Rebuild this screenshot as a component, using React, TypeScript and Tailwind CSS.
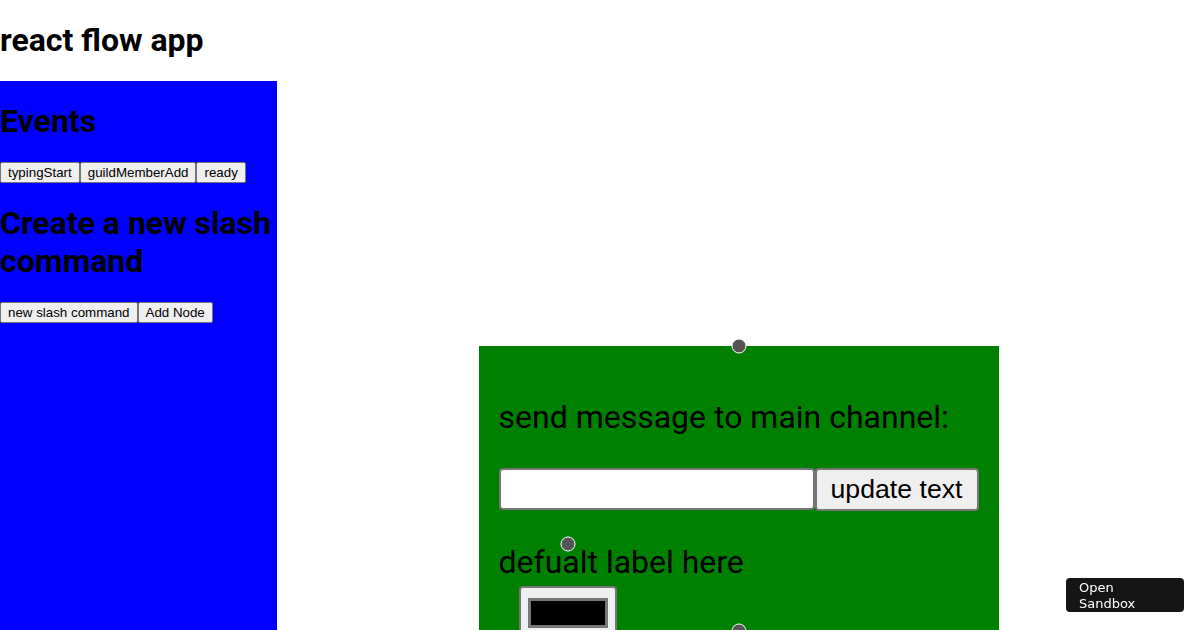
import React from 'react'

const sysBtn =
  "font-['Liberation_Sans',Arial,sans-serif] text-[13.33px] leading-[normal] text-black bg-[#efefef] border border-[#767676] rounded-[2px] px-[7px] py-[2px]"

function Handle({ className }: { className: string }) {
  return (
    <div
      className={`absolute w-[15px] h-[15px] rounded-full bg-[#555] border-[1.5px] border-white -translate-x-1/2 -translate-y-1/2 ${className}`}
    />
  )
}

function MessageNode() {
  return (
    <div className="absolute left-[201.5px] top-[265.5px] w-[520px] h-[285px] bg-[#008000] px-5 pt-5">
      <Handle className="left-1/2 top-0" />

      <p className="text-[32px] leading-[normal] my-[32px]">send message to main channel:</p>

      <div className="flex">
        <input
          type="text"
          className="w-[316px] h-[42px] bg-white border-2 border-[#767676] rounded-[4px] outline-none"
        />
        <button className="font-['Liberation_Sans',Arial,sans-serif] text-[26.67px] leading-[normal] text-black bg-[#efefef] border-2 border-[#767676] rounded-[4px] px-[14px] py-[4px] flex-1">
          update text
        </button>
      </div>

      <Handle className="left-[89px] top-[198px]" />
      <p className="text-[32px] leading-[normal] mt-[32px]">defualt label here</p>

      {/* color picker */}
      <div className="ml-[20px] mt-[5px] w-[98px] h-[54px] bg-[#efefef] border-2 border-[#767676] rounded-[4px] flex items-center justify-center">
        <div className="w-[80px] h-[30px] bg-black border-[3px] border-[#777]" />
      </div>

      <Handle className="left-1/2 top-full" />
    </div>
  )
}

export default function App() {
  return (
    <div className="font-['Roboto',sans-serif] text-black h-[630px] overflow-hidden">
      <h1 className="text-[32px] font-bold leading-[normal] my-[21.44px]">react flow app</h1>

      <div className="flex h-[549px]">
        {/* Сайдбар */}
        <aside className="w-[277px] shrink-0 bg-[#0000ff]">
          <h1 className="text-[32px] font-bold leading-[normal] my-[21.44px]">Events</h1>
          <div className="flex">
            <button className={sysBtn}>typingStart</button>
            <button className={sysBtn}>guildMemberAdd</button>
            <button className={sysBtn}>ready</button>
          </div>

          <h1 className="text-[32px] font-bold leading-[normal] my-[21.44px]">Create a new slash command</h1>
          <div className="flex">
            <button className={sysBtn}>new slash command</button>
            <button className={sysBtn}>Add Node</button>
          </div>
        </aside>

        {/* Канвас */}
        <div className="relative flex-1 overflow-hidden">
          <MessageNode />
        </div>
      </div>

      <div className="fixed right-[16px] bottom-[18px] w-[118px] h-[34px] bg-[#151515] rounded-[4px] pl-[13px] pt-[2px] font-['DejaVu_Sans',sans-serif] text-[13px] leading-[16px] text-white">
        <div>Open</div>
        <div>Sandbox</div>
      </div>
    </div>
  )
}
